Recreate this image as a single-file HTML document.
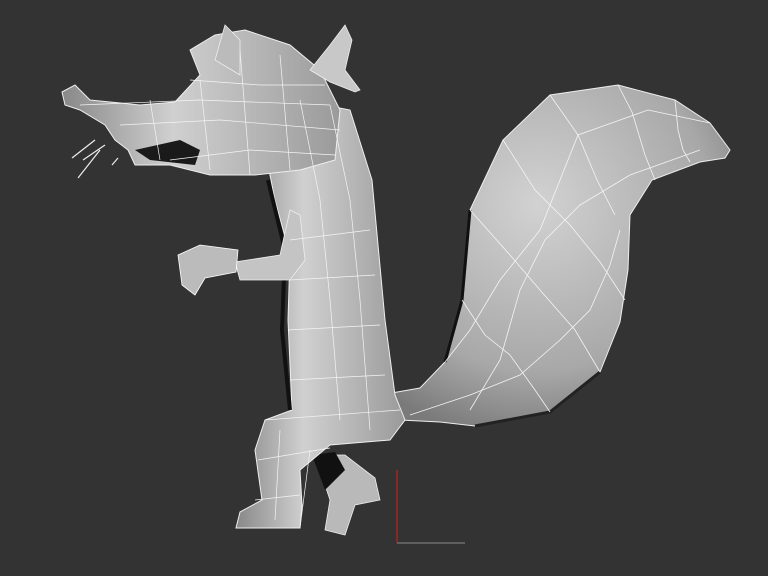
<!DOCTYPE html>
<html><head><style>html,body{margin:0;padding:0;background:#333;width:768px;height:576px;overflow:hidden}</style></head>
<body>
<svg width="768" height="576" viewBox="0 0 768 576" xmlns="http://www.w3.org/2000/svg">
<defs>
<radialGradient id="g" cx="0.45" cy="0.35" r="0.7"><stop offset="0" stop-color="#d2d2d2"/><stop offset="0.7" stop-color="#a8a8a8"/><stop offset="1" stop-color="#7a7a7a"/></radialGradient>
<linearGradient id="b" x1="0" x2="1"><stop offset="0" stop-color="#888"/><stop offset="0.4" stop-color="#d0d0d0"/><stop offset="1" stop-color="#9a9a9a"/></linearGradient>
</defs>
<rect width="768" height="576" fill="#333"/>
<!-- tail -->
<path d="M380,395 L400,420 440,422 475,426 550,412 600,372 620,322 628,270 630,215 652,180 700,162 725,158 730,150 710,123 675,100 618,85 550,95 503,140 470,210 462,300 445,362 420,388 Z" fill="url(#g)" stroke="#eee" stroke-width="1"/>
<path d="M470,210 L462,300 445,362" stroke="#111" stroke-width="3" fill="none"/>
<path d="M600,372 L550,412 475,426" stroke="#222" stroke-width="3" fill="none"/>
<g stroke="#f4f4f4" stroke-width="0.8" fill="none">
<path d="M503,140 L535,190 570,225 600,262 625,300"/>
<path d="M470,210 L510,255 540,290 575,330 600,372"/>
<path d="M462,300 L485,335 510,355 535,390 550,412"/>
<path d="M550,95 L578,135 597,180 615,215"/>
<path d="M618,85 L632,112 645,155 655,180"/>
<path d="M675,100 L678,130 683,150 690,162"/>
<path d="M445,362 L470,330 500,280 540,230 578,135 648,110 710,123"/>
<path d="M470,410 L500,360 520,290 545,240 580,205 630,175 700,150"/>
<path d="M410,415 L470,395 520,375 560,340 590,310 610,265 620,230"/>
</g>
<!-- back leg -->
<path d="M315,455 L330,500 325,530 345,535 355,505 380,500 375,478 345,455 Z" fill="#b9b9b9" stroke="#eee" stroke-width="0.8"/>
<path d="M312,455 L325,490 345,470 335,452 Z" fill="#111"/>
<!-- body -->
<path d="M275,200 L290,255 288,320 292,410 265,420 255,450 262,500 240,512 236,528 300,528 302,505 300,470 330,445 390,440 405,420 395,395 385,320 372,180 350,110 300,100 260,125 Z" fill="url(#b)" stroke="#eee" stroke-width="1"/>
<path d="M268,180 L285,250 282,330 290,410" stroke="#111" stroke-width="4" fill="none"/>
<!-- arm -->
<path d="M300,215 L305,260 290,280 240,280 235,262 280,255 290,210 Z" fill="#c4c4c4" stroke="#eee" stroke-width="0.8"/>
<path d="M178,255 L200,245 238,250 236,272 205,278 195,295 182,285 Z" fill="#bbb" stroke="#fff" stroke-width="0.8"/>
<!-- head -->
<path d="M62,92 L75,85 90,100 140,105 175,102 200,75 190,50 215,35 245,30 290,45 320,70 340,110 335,160 300,170 255,175 210,175 170,165 135,165 128,150 115,140 105,125 80,110 65,105 Z" fill="url(#b)" stroke="#eee" stroke-width="1"/>
<path d="M135,150 L180,140 200,150 195,165 150,160 Z" fill="#1a1a1a"/>
<!-- ears -->
<path d="M215,60 L225,25 240,40 240,75 Z" fill="#bbb" stroke="#eee" stroke-width="0.8"/>
<path d="M310,70 L330,45 345,25 352,40 345,70 360,90 355,92 330,82 Z" fill="#c8c8c8" stroke="#eee" stroke-width="0.8"/>
<!-- whiskers -->
<g stroke="#eee" stroke-width="1.2"><line x1="95" y1="140" x2="72" y2="158"/><line x1="105" y1="145" x2="83" y2="160"/><line x1="118" y1="158" x2="112" y2="165"/><line x1="78" y1="178" x2="100" y2="150"/></g>
<!-- wire grid on body -->
<g stroke="#f4f4f4" stroke-width="0.7" fill="none">
<path d="M300,100 L320,200 330,300 340,420"/><path d="M330,105 L350,200 360,300 370,430"/><path d="M310,450 L300,528"/><path d="M280,430 L275,520"/>
<path d="M290,240 L370,230"/><path d="M290,280 L375,275"/><path d="M288,330 L380,325"/><path d="M290,380 L385,375"/><path d="M265,420 L400,410"/><path d="M258,460 L330,448"/><path d="M255,500 L300,495"/>
<path d="M80,105 L200,100 330,105"/><path d="M120,125 L220,120 340,130"/><path d="M170,160 L250,150 335,155"/><path d="M190,80 L260,85 325,85"/>
<path d="M150,100 L160,160"/><path d="M200,80 L210,170"/><path d="M240,50 L250,175"/><path d="M280,55 L290,170"/>
</g>
<!-- axis -->
<line x1="397" y1="470" x2="397" y2="543" stroke="#b22" stroke-width="1.2"/>
<line x1="397" y1="543" x2="465" y2="543" stroke="#777" stroke-width="1.2"/>
</svg>
</body></html>
